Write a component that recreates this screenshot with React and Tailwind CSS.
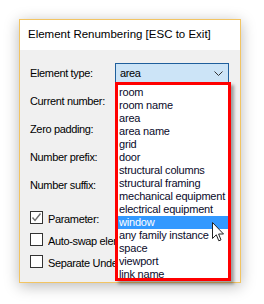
import React from "react";

const items = [
  "room",
  "room name",
  "area",
  "area name",
  "grid",
  "door",
  "structural columns",
  "structural framing",
  "mechanical equipment",
  "electrical equipment",
  "window",
  "any family instance",
  "space",
  "viewport",
  "link name",
];

const labelFont = { fontFamily: '"Liberation Sans", Arial, sans-serif' };

function Checkbox({ checked, label }) {
  return (
    <div className="h-[22px] flex items-center gap-[5px]">
      <div className="w-[13px] h-[13px] border border-[#333333] bg-white flex items-center justify-center shrink-0">
        {checked && (
          <svg width="11" height="11" viewBox="0 0 11 11">
            <path d="M1.5 5.5 L4 8.5 L9.5 1.5" fill="none" stroke="#6e6e6e" strokeWidth="1.4" />
          </svg>
        )}
      </div>
      <div className="w-[67px] overflow-hidden">
        <span className="text-[11px] tracking-[-0.35px] text-black whitespace-nowrap" style={labelFont}>
          {label}
        </span>
      </div>
    </div>
  );
}

export default function App() {
  return (
    <div className="w-[264px] h-[304px] bg-white overflow-hidden pl-[19px] pt-[19px]">
      <div className="relative w-[222px] h-[264px] border border-[#f2c462] bg-[#f0f0f0] shadow-[0_3px_14px_rgba(0,0,0,0.28)] flex flex-col">
        <div className="h-[30px] bg-white flex items-center pl-[8px] shrink-0">
          <span
            className="text-[11.5px] text-black whitespace-nowrap"
            style={{ fontFamily: '"Liberation Sans", Arial, sans-serif' }}
          >
            Element Renumbering [ESC to Exit]
          </span>
        </div>
        <div className="flex-1 pl-[10px] pt-[9px] flex flex-col">
          <div className="h-[28px] flex items-center">
            <span className="w-[85px] text-[11px] tracking-[-0.35px] text-black" style={labelFont}>
              Element type:
            </span>
            <div className="w-[114px] h-[21px] border border-[#1f5f9c] bg-[#cce4f7] flex items-center justify-between pl-[4px] pr-[4px]">
              <span className="text-[11px] tracking-[-0.35px] text-black" style={labelFont}>
                area
              </span>
              <svg width="9" height="5" viewBox="0 0 9 5" className="mr-[1px]">
                <path d="M0.5 0.5 L4.5 4.5 L8.5 0.5" fill="none" stroke="#333" strokeWidth="1" />
              </svg>
            </div>
          </div>
          {["Current number:", "Zero padding:", "Number prefix:", "Number suffix:"].map((l) => (
            <div key={l} className="h-[28px] flex items-center">
              <span className="text-[11px] tracking-[-0.35px] text-black" style={labelFont}>
                {l}
              </span>
            </div>
          ))}
          <div className="mt-[7px] flex flex-col">
            <Checkbox checked label="Parameter:" />
            <Checkbox label="Auto-swap elements" />
            <Checkbox label="Separate Underscore" />
          </div>
        </div>

        {/* dropdown list overlay */}
        <div className="absolute left-[95px] top-[62px] w-[116px] h-[199px] border-[3px] border-[#ff0000] bg-white overflow-hidden pt-px shadow-[3px_3px_3px_rgba(0,0,0,0.35)]">
          {items.map((it) => (
            <div
              key={it}
              className={
                it === "window"
                  ? "h-[13px] leading-[13px] text-[11px] tracking-[-0.2px] pl-px bg-[#3399ff] text-white whitespace-nowrap"
                  : "h-[13px] leading-[13px] text-[11px] tracking-[-0.2px] pl-px text-[#0a0a2a] whitespace-nowrap"
              }
              style={{ fontFamily: '"Liberation Sans", Arial, sans-serif' }}
            >
              {it}
            </div>
          ))}
        </div>

        {/* mouse cursor */}
        <svg
          className="absolute left-[192px] top-[202px]"
          width="13"
          height="21"
          viewBox="0 0 13 21"
        >
          <path
            d="M0.5 0.5 L0.5 16.5 L4.3 12.8 L6.8 18.8 L9 17.9 L6.6 12 L11.5 12 Z"
            fill="#ffffff"
            stroke="#222"
            strokeWidth="1"
            strokeLinejoin="miter"
          />
        </svg>
      </div>
    </div>
  );
}
